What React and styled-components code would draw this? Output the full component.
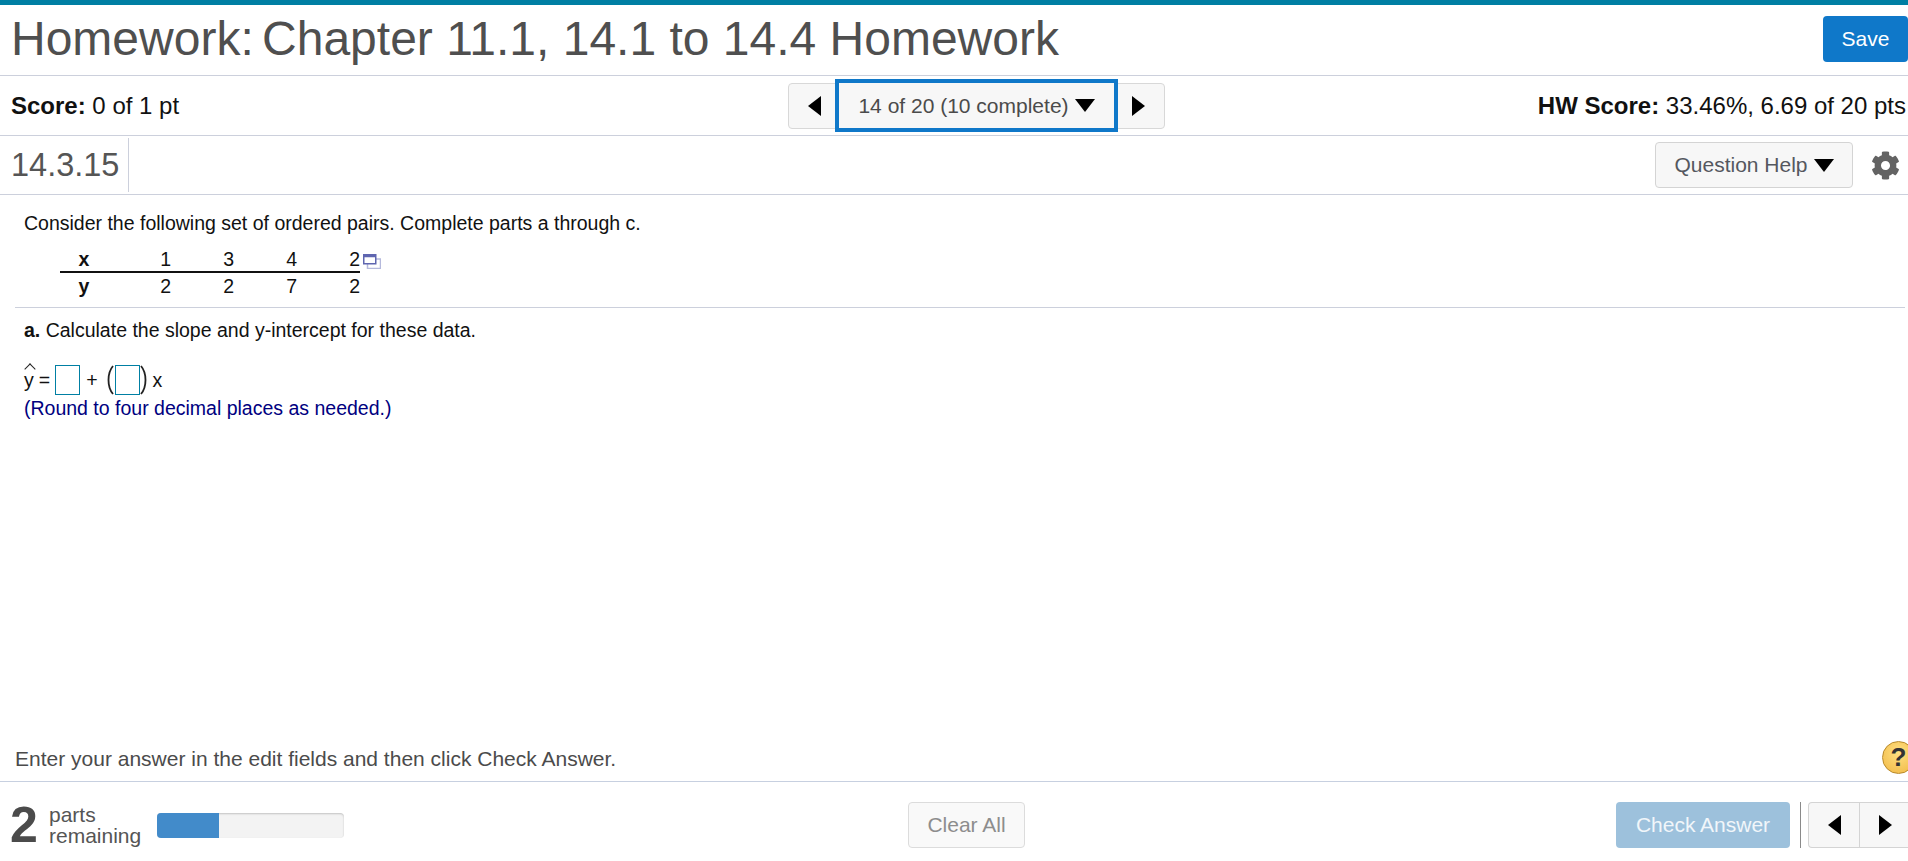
import React from "react";
import styled, { createGlobalStyle } from "styled-components";
import { FaCog } from "react-icons/fa";

const Global = createGlobalStyle`
  html, body { margin: 0; padding: 0; background: #fff; overflow: hidden; }
  * { box-sizing: border-box; }
  body { font-family: "Liberation Sans", Arial, sans-serif; color: #4b4b4b; }
`;
const Page = styled.div`
  width: 1908px; height: 861px; display: flex; flex-direction: column;
  border-top: 5px solid #007fa3; overflow: hidden;
`;
const TitleBar = styled.header`
  height: 71px; flex: none; display: flex; align-items: center; justify-content: space-between;
  padding: 0 0 4px 11px; border-bottom: 1px solid #ccd0dc;
`;
const Title = styled.h1`
  margin: 0; font-size: 48px; font-weight: 400; color: #4f4f4f; white-space: nowrap;
`;
const TitleLead = styled.span` margin-right: -5px; `;
const SaveButton = styled.button`
  width: 85px; height: 46px; margin-top: 2px; border: 0; border-radius: 4px; background: #0f78c9; color: #fff;
  font: 21px "Liberation Sans", Arial, sans-serif;
`;
const ScoreBar = styled.div`
  height: 60px; flex: none; display: grid; grid-template-columns: 777px auto 1fr; align-items: center;
  padding: 0 2px 0 11px; border-bottom: 1px solid #ccd0dc; font-size: 24px; color: #111;
`;
const ScoreRight = styled.div` justify-self: end; white-space: nowrap; `;
const Nav = styled.div`
  display: flex; align-items: center; height: 46px; width: 377px;
  border: 1px solid #d8d8d8; border-radius: 4px; background: #f7f7f7;
`;
const ArrowCell = styled.button`
  flex: ${(p) => (p.$fill ? 1 : "none")}; width: 46px; height: 100%; border: 0; background: transparent;
  padding: 0 ${(p) => p.$pr || 0}px 0 ${(p) => p.$pl || 0}px;
  display: flex; align-items: center; justify-content: center;
`;
const Select = styled.button`
  width: 283px; height: 53px; flex: none; border: 4px solid #0f78c9; background: #f7f7f7; color: #4b4b4b; padding: 0;
  display: flex; align-items: center; justify-content: center; gap: 6px;
  font: 21px "Liberation Sans", Arial, sans-serif;
`;
const QuestionBar = styled.div`
  height: 59px; flex: none; display: flex; align-items: center; justify-content: space-between;
  padding-right: 8px; border-bottom: 1px solid #ccd0dc;
`;
const QNumber = styled.div`
  height: 54px; width: 129px; padding-left: 11px; display: flex; align-items: center; font-size: 32.5px; color: #555;
  border-right: 1px solid #ccd0dc;
`;
const QTools = styled.div` display: flex; align-items: center; gap: 18px; `;
const HelpButton = styled.button`
  width: 198px; height: 46px; border: 1px solid #d4d4d4; border-radius: 4px; background: #f7f7f7; color: #55585f; padding: 0;
  display: flex; align-items: center; justify-content: center; gap: 6px;
  font: 21px "Liberation Sans", Arial, sans-serif;
`;
const Gear = styled(FaCog)` width: 29px; height: 29px; color: #636363; `;
const Main = styled.main`
  flex: 1; min-height: 0; padding: 17px 3px 0 15px; font-size: 19.5px; color: #111;
`;
const Para = styled.p` margin: 0 0 0 9px; line-height: 22px; `;
const TableRow = styled.div` display: flex; align-items: flex-start; margin: 12px 0 0 45px; `;
const Table = styled.div`
  display: grid; grid-template-columns: 48px 63px 63px 63px 63px; width: 300px;
`;
const Cell = styled.div`
  height: ${(p) => (p.$top ? 27 : 26)}px; line-height: 26px; text-align: right;
  ${(p) => p.$top && "border-bottom: 2px solid #111;"}
`;
const Label = styled(Cell)` text-align: center; font-weight: 700; `;
const CopyIcon = styled.svg` width: 18px; height: 15px; margin: 8px 0 0 3px; `;
const Divider = styled.hr` margin: 8px 0 0; border: 0; border-top: 1px solid #ccd0dc; `;
const Question = styled(Para)` margin-top: 11px; `;
const Equation = styled.div`
  display: flex; align-items: center; height: 30px; margin: 24px 0 0 9px; line-height: 30px;
`;
const Hat = styled.span`
  position: relative; display: inline-block;
  &::before { content: ""; position: absolute; left: 1.5px; top: 0; width: 7px; height: 7px; border-left: 1.5px solid #222; border-top: 1.5px solid #222; transform: rotate(45deg); }
`;
const Box = styled.span`
  display: inline-block; width: 25px; height: 30px; flex: none; margin-left: ${(p) => p.$l || 0}px; border: 1px solid #007fa3;
`;
const Symbol = styled.span` margin: 0 ${(p) => p.$m}px 0 ${(p) => p.$l}px; `;
const Paren = styled.svg` width: 8px; height: 30px; flex: none; `;
const Note = styled(Para)` color: #000080; margin-top: 2px; `;
const HintBar = styled.div`
  flex: none; height: 47px; display: flex; align-items: center; justify-content: space-between;
  padding: 2px 0 0 15px; border-bottom: 1px solid #c7d0e0; font-size: 21px; color: #4b4b4b;
`;
const HelpDot = styled.span`
  width: 33px; height: 33px; flex: none; margin: 0 -7px 3px 0; border-radius: 50%; border: 1px solid #b98a2a;
  background: radial-gradient(circle at 50% 35%, #ffe082, #f0b743);
  color: #333; font-weight: 700; font-size: 26px; display: flex; align-items: center; justify-content: center;
`;
const Footer = styled.footer`
  flex: none; height: 79px; display: grid; grid-template-columns: 898px auto 1fr; align-items: center; padding: 6px 0 0 10px;
`;
const PartsGroup = styled.div` display: flex; align-items: center; `;
const BigNum = styled.span` font-size: 50px; font-weight: 700; color: #4b4b4b; line-height: 50px; width: 39px; `;
const PartsText = styled.span` font-size: 21px; line-height: 21px; color: #555; width: 108px; `;
const Progress = styled.div`
  width: 187px; height: 25px; margin-top: 2px; border-radius: 4px; background: #f3f3f3; overflow: hidden;
  box-shadow: inset 0 1px 2px rgba(0,0,0,.2);
`;
const ProgressFill = styled.div` height: 100%; background: #428bca; `;
const ClearButton = styled.button`
  width: 117px; height: 46px; border: 1px solid #dcdcdc; border-radius: 4px; background: #f9f9f9; color: #8d8d8d;
  font: 21px "Liberation Sans", Arial, sans-serif;
`;
const FooterRight = styled.div` justify-self: end; display: flex; align-items: center; margin-right: -2px; `;
const CheckButton = styled.button`
  width: 174px; height: 46px; border: 0; border-radius: 4px; background: #9dc1dc; color: #f1f6fa;
  font: 21px "Liberation Sans", Arial, sans-serif;
`;
const Sep = styled.span` width: 1px; height: 46px; margin: 0 7px 0 10px; background: #8a8a8a; `;
const PageNav = styled.div`
  width: 102px; height: 46px; display: flex; border: 1px solid #d4d4d4; border-right: 0; border-radius: 4px 0 0 4px; background: #f7f7f7;
`;
const PageNavCell = styled(ArrowCell)`
  flex: 1; & + & { border-left: 1px solid #d4d4d4; }
`;

const Arrow = ({ dir }) => {
  const pts = { left: "13,0 13,20 0,10", right: "0,0 0,20 13,10", down: "0,0 20,0 10,13" }[dir];
  const w = dir === "down" ? 20 : 13;
  const h = dir === "down" ? 13 : 20;
  return (
    <svg width={w} height={h} viewBox={`0 0 ${w} ${h}`} aria-hidden="true">
      <polygon points={pts} fill="#000" />
    </svg>
  );
};

export default function App() {
  return (
    <Page>
      <Global />
      <TitleBar>
        <Title><TitleLead>Homework:</TitleLead> Chapter 11.1, 14.1 to 14.4 Homework</Title>
        <SaveButton>Save</SaveButton>
      </TitleBar>
      <ScoreBar>
        <div><b>Score:</b> 0 of 1 pt</div>
        <Nav>
          <ArrowCell $pl={5}><Arrow dir="left" /></ArrowCell>
          <Select>14 of 20 (10 complete)<Arrow dir="down" /></Select>
          <ArrowCell $fill $pr={5}><Arrow dir="right" /></ArrowCell>
        </Nav>
        <ScoreRight><b>HW Score:</b> 33.46%, 6.69 of 20 pts</ScoreRight>
      </ScoreBar>
      <QuestionBar>
        <QNumber>14.3.15</QNumber>
        <QTools>
          <HelpButton>Question Help<Arrow dir="down" /></HelpButton>
          <Gear />
        </QTools>
      </QuestionBar>
      <Main>
        <Para>Consider the following set of ordered pairs. Complete parts a through c.</Para>
        <TableRow>
          <Table>
            <Label $top>x</Label>
            <Cell $top>1</Cell><Cell $top>3</Cell><Cell $top>4</Cell><Cell $top>2</Cell>
            <Label>y</Label>
            <Cell>2</Cell><Cell>2</Cell><Cell>7</Cell><Cell>2</Cell>
          </Table>
          <CopyIcon viewBox="0 0 18 15" aria-hidden="true">
            <rect x="4.5" y="5" width="13" height="9.5" fill="none" stroke="#b5b9dc" strokeWidth="1.5" />
            <rect x="0.75" y="0.75" width="12" height="9" fill="#fff" stroke="#5f66b0" strokeWidth="1.5" />
            <rect x="0.75" y="0.75" width="12" height="2.5" fill="#5f66b0" />
          </CopyIcon>
        </TableRow>
        <Divider />
        <Question><b>a.</b> Calculate the slope and y-intercept for these data.</Question>
        <Equation>
          <Hat>y</Hat><Symbol $l={5} $m={5}>=</Symbol><Box /><Symbol $l={6} $m={8}>+</Symbol>
          <Paren viewBox="0 0 8 30" aria-hidden="true"><path d="M7 1C1 8 1 22 7 29" fill="none" stroke="#222" strokeWidth="1.8" /></Paren>
          <Box $l={1} />
          <Paren viewBox="0 0 8 30" aria-hidden="true"><path d="M1 1C7 8 7 22 1 29" fill="none" stroke="#222" strokeWidth="1.8" /></Paren>
          <Symbol $l={5} $m={0}>x</Symbol>
        </Equation>
        <Note>(Round to four decimal places as needed.)</Note>
      </Main>
      <HintBar>
        <span>Enter your answer in the edit fields and then click Check Answer.</span>
        <HelpDot>?</HelpDot>
      </HintBar>
      <Footer>
        <PartsGroup>
          <BigNum>2</BigNum>
          <PartsText>parts<br />remaining</PartsText>
          <Progress><ProgressFill style={{ width: "33%" }} /></Progress>
        </PartsGroup>
        <ClearButton>Clear All</ClearButton>
        <FooterRight>
          <CheckButton>Check Answer</CheckButton>
          <Sep />
          <PageNav>
            <PageNavCell><Arrow dir="left" /></PageNavCell>
            <PageNavCell><Arrow dir="right" /></PageNavCell>
          </PageNav>
        </FooterRight>
      </Footer>
    </Page>
  );
}
